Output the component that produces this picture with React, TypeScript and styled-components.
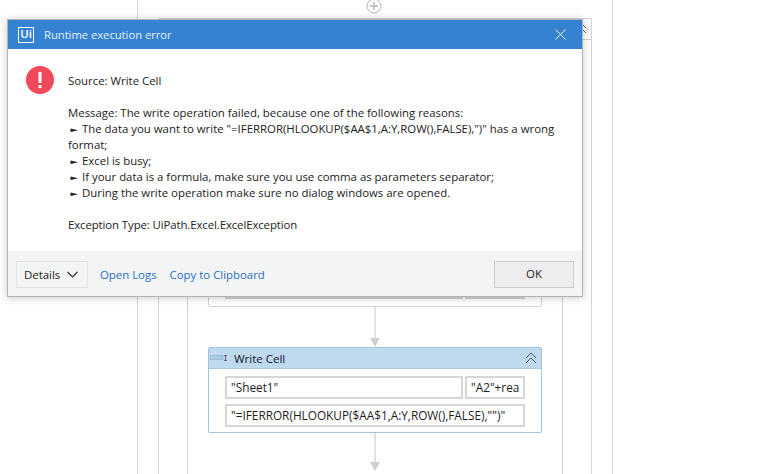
import React from "react";
import styled, { createGlobalStyle } from "styled-components";

const GlobalStyle = createGlobalStyle`
  * {
    box-sizing: border-box;
  }
  html, body {
    margin: 0;
    padding: 0;
    background: #fff;
    overflow: hidden;
  }
  body {
    font-family: "Open Sans", "Noto Sans", sans-serif;
    font-size: 11.4px;
    color: #1f1f1f;
  }
`;

const Page = styled.div`
  position: relative;
  width: 763px;
  height: 474px;
  overflow: hidden;
  background: #fff;
`;

const Canvas = styled.div`
  width: 476px;
  height: 474px;
  margin-left: 137px;
  border-left: 1px solid #d4d4d4;
  border-right: 1px solid #d4d4d4;
  padding: 18px 20px 0;
`;

const PlusIcon = styled.svg`
  position: absolute;
  left: 366px;
  top: -2px;
`;

const OuterSequence = styled.div`
  height: 456px;
  border: 1px solid #d4d4d4;
  border-bottom: 0;
`;

const OuterHeader = styled.div`
  height: 21px;
  display: flex;
  justify-content: flex-end;
  align-items: center;
  padding-right: 4px;
  border-bottom: 1px solid #d4d4d4;
`;

const InnerSequence = styled.div`
  height: 434px;
  margin: 0 28px;
  border-left: 1px solid #d4d4d4;
  border-right: 1px solid #d4d4d4;
  padding: 0 20px;
  display: flex;
  flex-direction: column;
`;

const Card = styled.div<{ $selected?: boolean }>`
  flex: none;
  border: 1px solid ${(p) => (p.$selected ? "#9fc5e2" : "#d4d4d4")};
  border-radius: 2px;
  background: #fff;
`;

const HiddenCard = styled(Card)`
  height: 267px;
  padding: 0 16px;
  display: flex;
  align-items: flex-end;
  gap: 2px;
`;

const CoveredInput = styled.div<{ $w: number }>`
  width: ${(p) => p.$w}px;
  height: 8px;
  margin-bottom: 7px;
  border: 2px solid #d4d4d4;
  border-top: 0;
`;

const ArrowBox = styled.svg`
  flex: none;
  display: block;
  align-self: center;
`;

const CardHeader = styled.div`
  height: 21px;
  display: flex;
  align-items: center;
  padding: 0 3px 0 1px;
  background: #bfdaee;
  border-bottom: 1px solid #a9cbe4;
`;

const CardTitle = styled.span`
  margin-left: 6px;
  font-size: 11.5px;
  color: #10162a;
  flex: 1;
`;

const CardBody = styled.div`
  padding: 7px 16px 5px;
  display: flex;
  flex-direction: column;
  gap: 5px;
`;

const InputRow = styled.div`
  display: flex;
  gap: 2px;
`;

const Field = styled.div<{ $grow?: boolean }>`
  height: 23px;
  flex: ${(p) => (p.$grow ? "1" : "none")};
  width: ${(p) => (p.$grow ? "auto" : "60px")};
  border: 2px solid #d6d6d6;
  padding: 0 4px;
  line-height: 18px;
  font-size: 11.8px;
  color: #1c1c1c;
  white-space: nowrap;
  overflow: hidden;
`;

const Dialog = styled.div`
  position: absolute;
  left: 7px;
  top: 19px;
  width: 576px;
  height: 278px;
  border: 1px solid #b4b4b4;
  background: #fff;
  box-shadow: 0 1px 8px rgba(0, 0, 0, 0.22);
  display: flex;
  flex-direction: column;
`;

const TitleBar = styled.div`
  height: 29px;
  flex: none;
  display: flex;
  align-items: center;
  padding: 0 16px 0 10px;
  background: #3582d2;
  color: #e6f0fa;
`;

const Logo = styled.div`
  width: 16px;
  height: 16px;
  border: 1.5px solid #fff;
  color: #fff;
  font-size: 11.5px;
  font-weight: 600;
  line-height: 12px;
  text-align: center;
`;

const DialogTitle = styled.div`
  margin-left: 10px;
  flex: 1;
  font-size: 11.2px;
`;

const Body = styled.div`
  flex: 1;
  display: flex;
  padding: 17px 18px 0;
  gap: 14px;
`;

const ErrorIcon = styled.svg`
  flex: none;
`;

const Message = styled.div`
  width: 494px;
  padding-top: 7px;
  color: #222;
`;

const Line = styled.div<{ $gap?: boolean }>`
  line-height: 16px;
  margin-top: ${(p) => (p.$gap ? "16px" : "0")};
  white-space: nowrap;
`;

const ExceptionLine = styled(Line)`
  letter-spacing: -0.1px;
`;

const Bullet = styled.span`
  display: inline-block;
  width: 11px;
  margin-right: 3px;
  font-size: 10px;
  line-height: 10px;
  transform: scale(1.25, 0.6);
  transform-origin: 0 60%;
`;

const Footer = styled.div`
  height: 45px;
  flex: none;
  display: flex;
  align-items: center;
  padding: 0 8px;
  background: #f3f4f4;
  border-top: 1px solid #efefef;
`;

const DetailsButton = styled.div`
  width: 72px;
  height: 27px;
  display: flex;
  align-items: center;
  justify-content: space-between;
  padding: 0 9px 0 7px;
  border: 1px solid #e0e1e1;
  color: #222;
`;

const FooterLink = styled.a`
  margin-left: 12px;
  color: #1f6fc9;

  & + & {
    margin-left: 13px;
  }
`;

const OkButton = styled.div`
  width: 80px;
  height: 27px;
  margin-left: auto;
  border: 1px solid #cdcdcd;
  background: #ededef;
  text-align: center;
  line-height: 24px;
  color: #222;
`;

const Arrow = ({ height }: { height: number }) => (
  <ArrowBox width="15" height={height} viewBox={`0 0 15 ${height}`}>
    <rect x="6" y="0" width="2" height={height - 9} fill="#e2e2e2" />
    <path d={`M2 ${height - 9}H12L7 ${height}Z`} fill="#d0d0d0" />
  </ArrowBox>
);

const App = () => {
  return (
    <Page>
      <GlobalStyle />
      <Canvas>
        <OuterSequence>
          <OuterHeader>
            <svg width="10" height="12" viewBox="0 0 10 12" fill="none" stroke="#4d5a66">
              <path d="M1 5l4-4 4 4M1 10l4-4 4 4" />
            </svg>
          </OuterHeader>
          <InnerSequence>
            <HiddenCard>
              <CoveredInput $w={238} />
              <CoveredInput $w={60} />
            </HiddenCard>
            <Arrow height={40} />
            <Card $selected>
              <CardHeader>
                <svg width="18" height="8" viewBox="0 0 18 8">
                  <rect x="0.5" y="1.5" width="12.5" height="4" fill="#a5d0e6" stroke="#9dbdd3" />
                  <path d="M14 1.5h3M15.5 1.5v5M14 6.5h3" stroke="#667" fill="none" />
                </svg>
                <CardTitle>Write Cell</CardTitle>
                <svg width="14" height="12" viewBox="0 0 14 12" fill="none" stroke="#4d5a66">
                  <path d="M2 6l5-5 5 5M2 11l5-5 5 5" />
                </svg>
              </CardHeader>
              <CardBody>
                <InputRow>
                  <Field $grow>"Sheet1"</Field>
                  <Field>"A2"+rea</Field>
                </InputRow>
                <InputRow>
                  <Field $grow>"=IFERROR(HLOOKUP($AA$1,A:Y,ROW(),FALSE),"")"</Field>
                </InputRow>
              </CardBody>
            </Card>
            <Arrow height={38} />
          </InnerSequence>
        </OuterSequence>
      </Canvas>
      <PlusIcon width="16" height="16" viewBox="0 0 16 16" fill="none" stroke="#b4b4b4">
        <circle cx="8" cy="8" r="7" />
        <path d="M8 4v8M4 8h8" strokeWidth="1.4" />
      </PlusIcon>
      <Dialog>
        <TitleBar>
          <Logo>Ui</Logo>
          <DialogTitle>Runtime execution error</DialogTitle>
          <svg width="11" height="11" viewBox="0 0 11 11" stroke="#fff" fill="none">
            <path d="M.5.5l10 10M10.5.5l-10 10" />
          </svg>
        </TitleBar>
        <Body>
          <ErrorIcon width="28" height="28" viewBox="0 0 28 28">
            <circle cx="14" cy="14" r="14" fill="#ee4a5a" />
            <rect x="12.5" y="6" width="3" height="11" fill="#fff" />
            <rect x="12.5" y="19" width="3" height="3" fill="#fff" />
          </ErrorIcon>
          <Message>
            <Line>Source: Write Cell</Line>
            <Line $gap>Message: The write operation failed, because one of the following reasons:</Line>
            <Line>
              <Bullet>►</Bullet>
              The data you want to write "=IFERROR(HLOOKUP($AA$1,A:Y,ROW(),FALSE),")" has a wrong
            </Line>
            <Line>format;</Line>
            <Line>
              <Bullet>►</Bullet>
              Excel is busy;
            </Line>
            <Line>
              <Bullet>►</Bullet>
              If your data is a formula, make sure you use comma as parameters separator;
            </Line>
            <Line>
              <Bullet>►</Bullet>
              During the write operation make sure no dialog windows are opened.
            </Line>
            <ExceptionLine $gap>Exception Type: UiPath.Excel.ExcelException</ExceptionLine>
          </Message>
        </Body>
        <Footer>
          <DetailsButton>
            Details
            <svg width="11" height="7" viewBox="0 0 11 7" fill="none" stroke="#333" strokeWidth="1.2">
              <path d="M.5 1l5 5 5-5" />
            </svg>
          </DetailsButton>
          <FooterLink>Open Logs</FooterLink>
          <FooterLink>Copy to Clipboard</FooterLink>
          <OkButton>OK</OkButton>
        </Footer>
      </Dialog>
    </Page>
  );
};

export default App;
